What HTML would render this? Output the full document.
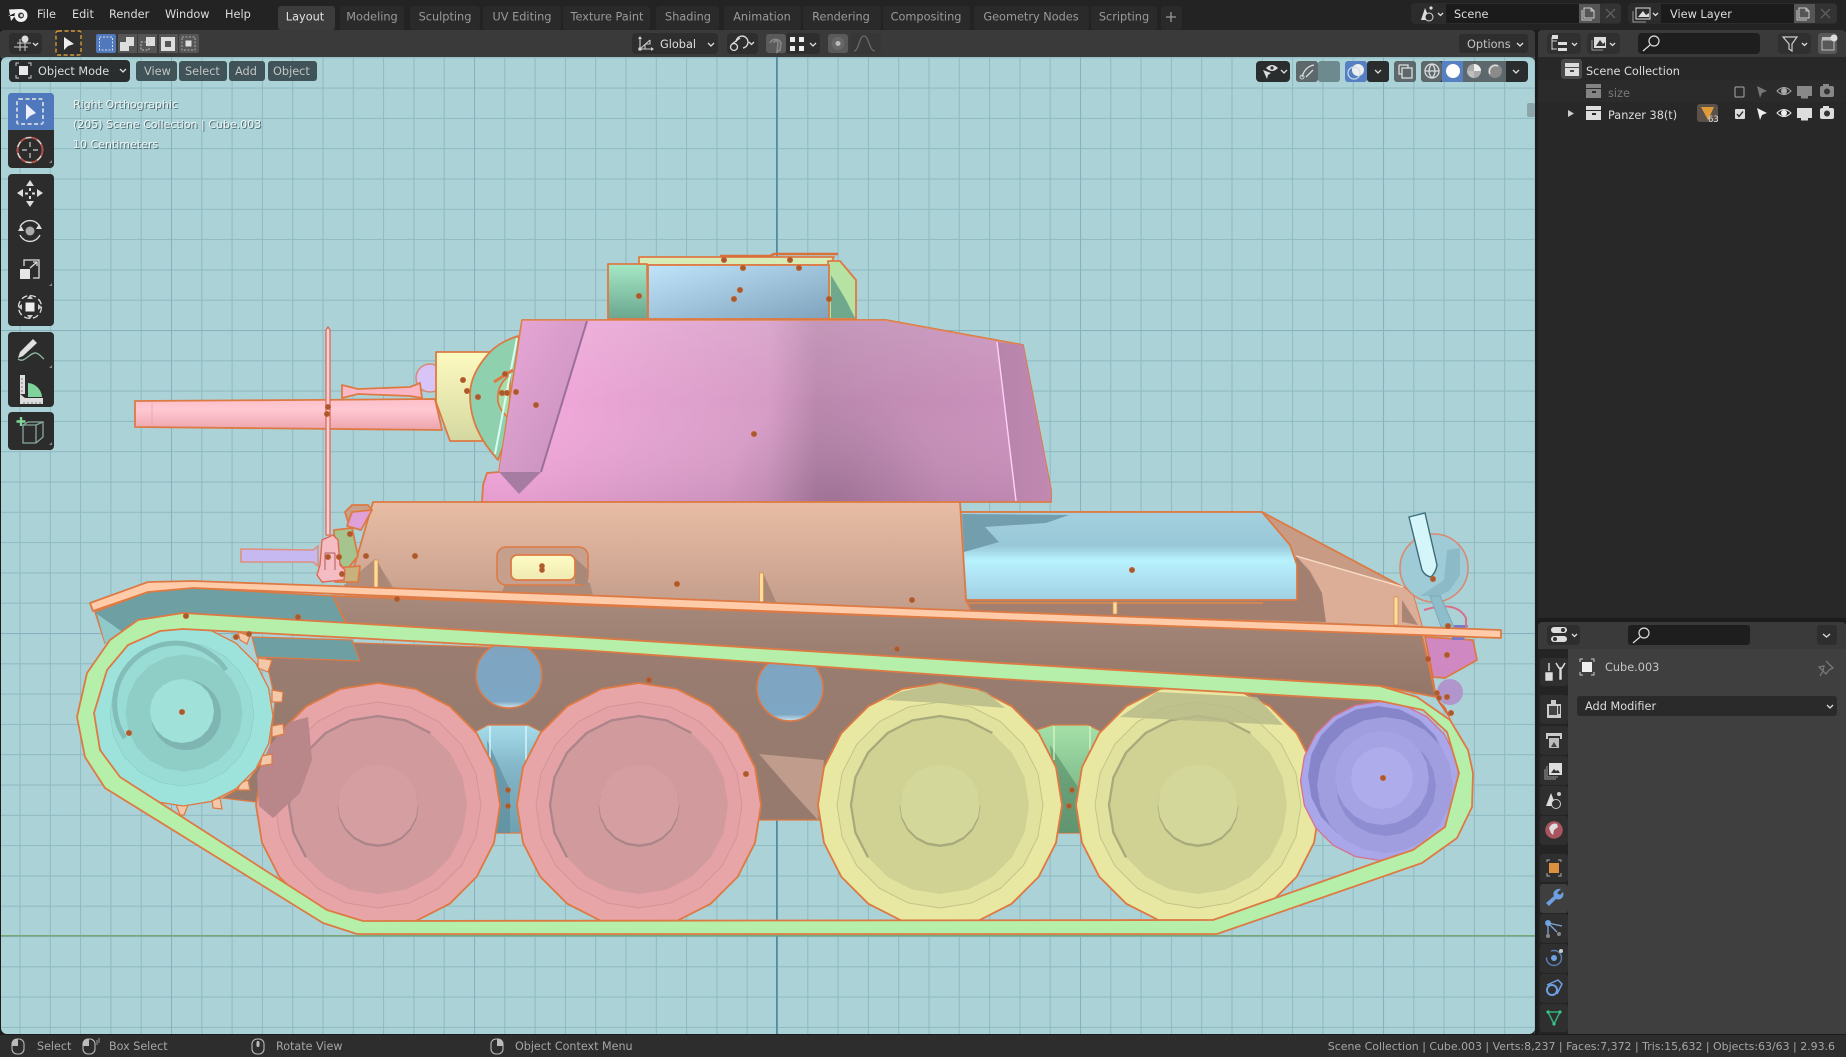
<!DOCTYPE html>
<html><head><meta charset="utf-8"><title>Blender</title>
<style>
html,body{margin:0;padding:0;background:#1c1c1c;width:1846px;height:1057px;overflow:hidden}
svg{display:block;position:absolute;left:0;top:0;filter:blur(.35px)}
text{font-family:"DejaVu Sans","Liberation Sans",sans-serif;font-size:11.3px;fill:#c4c4c4}
.t{fill:#9a9a9a;text-anchor:middle}
.o{fill:#eef5f6;font-size:11px;filter:drop-shadow(1px 1px 0 rgba(50,75,80,.75))}
.s{fill:#a6a6a6;font-size:11.15px}
.e{stroke:#dd7a44;stroke-width:1.8;stroke-linejoin:round}
.i{fill:#ddd}
.n{fill:none;stroke:#ddd;stroke-width:1.3}
</style></head><body>
<svg width="1846" height="1057" viewBox="0 0 1846 1057" xmlns="http://www.w3.org/2000/svg">
<defs>
<pattern id="gr" x="777" y="27" width="30.3" height="30.3" patternUnits="userSpaceOnUse"><path d="M.5 0V30.3M0 .5H30.3" stroke="#74a5b0" stroke-width="1" fill="none" opacity=".55"/></pattern>
<pattern id="gm" x="171" y="27" width="303" height="303" patternUnits="userSpaceOnUse"><path d="M.5 0V303M0 .5H303" stroke="#6d9eaa" stroke-width="1.2" fill="none" opacity=".28"/></pattern>
<polygon id="p" points="100,0 95.1,30.9 80.9,58.8 58.8,80.9 30.9,95.1 0,100 -30.9,95.1 -58.8,80.9 -80.9,58.8 -95.1,30.9 -100,0 -95.1,-30.9 -80.9,-58.8 -58.8,-80.9 -30.9,-95.1 0,-100 30.9,-95.1 58.8,-80.9 80.9,-58.8 95.1,-30.9"/>
<polyline id="a" fill="none" points="-80.9,58.8 -95.1,30.9 -100,0 -95.1,-30.9 -80.9,-58.8 -58.8,-80.9 -30.9,-95.1 0,-100 30.9,-95.1 58.8,-80.9"/>
<polyline id="b" fill="none" points="-92,39 -81,59 -59,81 -31,95 0,100 31,95 59,81 81,59 92,39"/>
<g id="wp">
<use href="#p" transform="scale(1.22)" fill="#e8a5a8" stroke="#dd7a44" stroke-width="1.5"/>
<use href="#p" transform="scale(1.03)" fill="#e4a2a6" stroke="#cf9497" stroke-width=".9"/>
<use href="#p" transform="scale(.89)" fill="#d19a9d"/>
<use href="#a" transform="scale(.89)" stroke="#ab858a" stroke-width="2.6"/>
<use href="#p" transform="translate(0 1.5) scale(.405)" fill="#ab858a"/>
<use href="#p" transform="translate(0 -.5) scale(.4)" fill="#d59ea1"/>
</g>
<g id="wy">
<use href="#p" transform="scale(1.22)" fill="#e8e8a2" stroke="#dd7a44" stroke-width="1.5"/>
<use href="#p" transform="scale(1.03)" fill="#e1e29d" stroke="#c2c288" stroke-width=".9"/>
<use href="#p" transform="scale(.89)" fill="#cfd292"/>
<use href="#a" transform="scale(.89)" stroke="#a9aa7c" stroke-width="2.6"/>
<use href="#p" transform="translate(0 1.5) scale(.405)" fill="#a9aa7c"/>
<use href="#p" transform="translate(0 -.5) scale(.4)" fill="#d4d79a"/>
</g>
<linearGradient id="tur" gradientUnits="userSpaceOnUse" x1="520" y1="0" x2="1050" y2="0"><stop offset="0" stop-color="#f4a9dc"/><stop offset=".25" stop-color="#e3a2d0"/><stop offset=".47" stop-color="#d69cc6"/><stop offset=".56" stop-color="#bc89af"/><stop offset=".66" stop-color="#c08bb3"/><stop offset="1" stop-color="#cc92be"/></linearGradient>
<linearGradient id="turv" x1="0" y1="0" x2="0" y2="1"><stop offset="0" stop-color="#fff" stop-opacity=".12"/><stop offset=".45" stop-color="#fff" stop-opacity="0"/><stop offset="1" stop-color="#503050" stop-opacity=".1"/></linearGradient>
<radialGradient id="tsh" gradientUnits="userSpaceOnUse" cx="835" cy="500" r="110"><stop offset="0" stop-color="#5c3e58" stop-opacity=".22"/><stop offset="1" stop-color="#5c3e58" stop-opacity="0"/></radialGradient>
<linearGradient id="arm" x1="0" y1="0" x2="1" y2="1"><stop offset="0" stop-color="#eaa8d8"/><stop offset="1" stop-color="#c48fba"/></linearGradient>
<linearGradient id="rear" x1="0" y1="0" x2="1" y2="0"><stop offset="0" stop-color="#b684ab"/><stop offset="1" stop-color="#c288b2"/></linearGradient>
<linearGradient id="hull" x1="0" y1="0" x2="0" y2="1"><stop offset="0" stop-color="#e9bda5"/><stop offset="1" stop-color="#c29c8a"/></linearGradient>
<linearGradient id="deck" x1="0" y1="0" x2="0" y2="1"><stop offset="0" stop-color="#a4d0de"/><stop offset=".38" stop-color="#98c8d8"/><stop offset=".55" stop-color="#b8f2ff"/><stop offset=".75" stop-color="#aee2f2"/><stop offset="1" stop-color="#9fd0e2"/></linearGradient>
<linearGradient id="brown" x1="0" y1="0" x2="0" y2="1"><stop offset="0" stop-color="#a88a7d"/><stop offset="1" stop-color="#937668"/></linearGradient>
<linearGradient id="brown2" x1="0" y1="0" x2="0" y2="1"><stop offset="0" stop-color="#9a7c70"/><stop offset="1" stop-color="#967a6e"/></linearGradient>
<linearGradient id="bar" x1="0" y1="0" x2="0" y2="1"><stop offset="0" stop-color="#fcc0ca"/><stop offset=".35" stop-color="#ffc8d2"/><stop offset="1" stop-color="#eca4ac"/></linearGradient>
<linearGradient id="yel" x1="0" y1="0" x2="0" y2="1"><stop offset="0" stop-color="#fdfac0"/><stop offset="1" stop-color="#d4d8a0"/></linearGradient>
<linearGradient id="grn" x1="0" y1="0" x2="0" y2="1"><stop offset="0" stop-color="#a6e8c6"/><stop offset="1" stop-color="#6aa78f"/></linearGradient>
<linearGradient id="blu" x1="0" y1="0" x2="1" y2="1"><stop offset="0" stop-color="#c0e4fa"/><stop offset="1" stop-color="#7fa3bc"/></linearGradient>
<linearGradient id="hole" x1="0" y1="0" x2="0" y2="1"><stop offset="0" stop-color="#7fa4c0"/><stop offset=".9" stop-color="#7da7c4"/><stop offset="1" stop-color="#cfe4f0"/></linearGradient>
<linearGradient id="sus" x1="0" y1="0" x2="0" y2="1"><stop offset="0" stop-color="#a6dcea"/><stop offset=".4" stop-color="#82b6c8"/><stop offset="1" stop-color="#6ea2b0"/></linearGradient>
<linearGradient id="sug" x1="0" y1="0" x2="0" y2="1"><stop offset="0" stop-color="#a4e0a6"/><stop offset=".4" stop-color="#8cc896"/><stop offset="1" stop-color="#6fa47c"/></linearGradient>
<linearGradient id="hat" x1="0" y1="0" x2="0" y2="1"><stop offset="0" stop-color="#fffcc6"/><stop offset="1" stop-color="#eeeab0"/></linearGradient>
</defs>

<!-- viewport -->
<rect x="1" y="57" width="1534" height="977" rx="6" fill="#abd2d7"/>
<rect x="1" y="57" width="1534" height="977" fill="url(#gr)"/>
<rect x="1" y="57" width="1534" height="977" fill="url(#gm)"/>
<rect x="776" y="57" width="1.6" height="977" fill="#4e8ba8"/>
<rect x="1" y="935" width="1534" height="1.4" fill="#76a878"/>

<g>
<!-- cupola -->
<polygon class="e" fill="#d8ecb8" points="639,257 834,257 830,265 639,265"/>
<path d="M720,256H770L774,254H838" stroke="#d9703c" stroke-width="2.6" fill="none"/>
<polygon class="e" fill="url(#grn)" points="608,264 647,264 648,319 608,319"/>
<polygon class="e" fill="#b6e2a4" points="828,261 840,261 856,280 856,319 828,319"/>
<polygon fill="#6fa88c" points="831,275 846,300 855,318 831,318"/>
<polygon class="e" fill="url(#blu)" points="648,265 829,265 829,319 648,319"/>
<!-- coax gun, sphere -->
<circle cx="430" cy="378" r="14" fill="#d8c4f6" stroke="#d98a70" stroke-width="1.5"/>
<polygon class="e" fill="#fab8c6" stroke-width="1.5" points="342,385 358,389 410,387 420,383 422,398 410,396 358,394 342,398"/>
<!-- barrel -->
<path class="e" fill="url(#bar)" d="M135,401L300,400L435,399L442,430L135,427Z"/>
<path d="M152,402V426" stroke="#e8a0a4" stroke-width="1" opacity=".7"/>
<!-- mantlet -->
<polygon class="e" fill="url(#yel)" points="436,352 492,352 482,441 450,441 436,402"/>
<path class="e" fill="#8fd0ae" d="M518,336C505,340 497,345 490,352C477,366 470,380 470,395C470,420 480,440 498,460L520,400Z"/>
<path class="e" fill="#a8dcaa" stroke-width="1.2" d="M510,375C500,382 497,392 498,402C500,410 505,415 510,420Z"/>
<path d="M517,338L495,454" stroke="#d9fff2" stroke-width="2"/>
<path d="M494,382L513,370" stroke="#dd7a44" stroke-width="3"/>
<!-- turret -->
<polygon class="e" fill="url(#tur)" points="522,320 886,320 1023,345 1051,490 1051,502 482,502 483,485 487,473 499,472"/>
<polygon fill="url(#turv)" points="522,320 886,320 1023,345 1051,490 1051,501 483,501 483,485 487,473 499,472"/>
<polygon fill="url(#tsh)" points="720,380 950,380 950,501 720,501"/>
<polygon fill="url(#rear)" points="997,342 1023,345 1051,490 1051,501 1016,501"/>
<path d="M997,342L1016,501" stroke="#ffd2f4" stroke-width="1.4"/>
<polygon fill="url(#arm)" points="523,321 587,321 541,472 499,472"/>
<path d="M587,321L541,472" stroke="#9a6f9a" stroke-width="2"/>
<polygon fill="#a67ca2" points="499,472 541,472 519,494"/>
<!-- rear body -->
<polygon class="e" fill="#c89c84" points="1262,512 1403,587 1413,595 1423,630 960,610 960,512"/>
<polygon fill="#a27f6f" points="1296,556 1310,572 1322,593 1326,622 966,612 966,600 1297,600"/>
<polygon fill="#dcae98" points="1296,556 1403,587 1413,595 1422,627 1326,622 1322,593 1310,570"/>
<path d="M1296,556L1403,587" stroke="#fbdcc8" stroke-width="1.4"/>
<polygon fill="#a88575" points="1402,622 1402,600 1418,625"/>
<!-- deck -->
<polygon class="e" fill="url(#deck)" points="960,512 1262,512 1290,545 1297,565 1297,600 966,600"/>
<polygon fill="#729eae" points="962,514 1069,515 1046,523 985,527 999,542 964,552"/>
<path d="M966,603H1263" stroke="#e08a50" stroke-width="1.4"/>
<!-- upper hull -->
<polygon class="e" fill="url(#hull)" points="373,502 960,502 966,600 972,612 345,598"/>
<polygon fill="#ad8b7a" points="590,583 594,600 500,596 505,585"/>
<polygon fill="#b08d7c" points="344,585 375,559 395,590 345,595"/>
<rect x="497" y="547" width="91" height="38" rx="9" fill="#c6a08c" stroke="#dd7a44" stroke-width="1.6"/>
<polygon fill="#a98878" points="575,558 588,570 588,584 575,584"/>
<rect x="511" y="555" width="64" height="25" rx="6" fill="url(#hat)" stroke="#dd7a44" stroke-width="1.8"/>
<polygon fill="#a98878" points="378,562 392,590 379,590"/>
<polygon fill="#a98878" points="764,575 777,604 764,604"/>
<!-- front hull bits -->
<polygon class="e" stroke-width="1.3" fill="#c9a08a" points="345,512 352,505 368,505 372,510 350,528"/>
<polygon class="e" stroke-width="1.3" fill="#e0a0d8" points="352,512 372,510 361,530 347,526"/>
<polygon class="e" stroke-width="1.3" fill="#a5c48e" points="334,530 352,528 358,556 345,572 335,555"/>
<polygon class="e" stroke-width="1.2" fill="#c9b07c" points="335,568 360,566 358,582 335,582"/>
<!-- yellow rods -->
<g stroke="#dd8a50" stroke-width=".8" fill="#f8e09c">
<rect x="374" y="560" width="4" height="28"/><rect x="759.5" y="573" width="4" height="30"/><rect x="1394" y="597" width="4" height="28"/><rect x="1113" y="602" width="4" height="12"/>
</g>
<!-- right side parts -->
<polygon class="e" fill="#d088c2" points="1425,637 1473,640 1477,660 1445,678 1433,677"/>
<polygon fill="#7878c8" points="1452,625 1468,625 1464,640 1452,640"/>
<path d="M1424,610C1440,605 1458,603 1466,618L1466,636" fill="none" stroke="#d8708a" stroke-width="2"/>
<circle cx="1450" cy="692" r="13" fill="#b096cc"/>
<circle cx="1434" cy="568" r="34" fill="#9fcbd6" stroke="#d98a70" stroke-width="1.6"/>
<polygon fill="#8cbac6" points="1447,550 1460,548 1460,575 1450,590 1440,596 1420,596 1444,580"/>
<path d="M1430,596L1440,596L1454,627L1443,632Z" fill="#8cbecb" stroke="#7fa8b4" stroke-width="1"/>
<path d="M1409,517L1425,513L1437,565Q1436,572 1431,577Q1425,576 1422,570Z" fill="#d4f6fb" stroke="#3f6c78" stroke-width="1.4"/>
<polygon points="1423,627 1436,697 1446,708 1452,722 1438,702 1426,640" fill="#e0683a"/>
<!-- lower body band -->
<polygon fill="#6ea0a3" stroke="#dd7a44" stroke-width="1.4" points="95,612 148,592 193,588 333,596 346,624 183,613 138,620 105,643"/>
<polygon fill="#8fc9c9" points="97,614 128,636 105,643"/>
<polygon class="e" fill="url(#brown)" stroke-width="1.4" points="333,596 1000,620 1422,635 1436,697 1380,686 1000,663 346,623"/>
<polygon fill="url(#brown2)" stroke="#dd7a44" stroke-width="1.2" points="262,640 580,650 1000,679 1380,700 1330,740 1300,820 300,820 256,802 222,798 245,785 270,750 275,700"/>
<polygon fill="#bf9c8c" points="759,754 824,760 818,820 793,793"/>
<polygon fill="#6ea0a3" stroke="#dd7a44" stroke-width="1.2" points="252,637 352,640 360,661 257,657"/>
<!-- rollers -->
<circle cx="509" cy="675" r="33" fill="url(#hole)" stroke="#dd7a44" stroke-width="1.6"/>
<circle cx="790" cy="688" r="33" fill="url(#hole)" stroke="#dd7a44" stroke-width="1.6"/>
<!-- suspension -->
<polygon fill="url(#sus)" stroke="#dd7a44" stroke-width="1.2" points="488,725 528,725 542,732 542,833 475,833 475,732"/>
<polygon fill="#5f8f9f" opacity=".7" points="487,740 510,790 510,833 490,833"/>
<path d="M490,726V760M526,726V760" stroke="#d8f6ff" stroke-width="1.4"/>
<polygon fill="url(#sug)" stroke="#dd7a44" stroke-width="1.2" points="1052,725 1088,725 1102,732 1102,833 1030,833 1030,732"/>
<polygon fill="#568a68" opacity=".6" points="1050,745 1080,790 1080,833 1058,833"/>
<path d="M1054,726V760M1090,726V760" stroke="#d6f6c8" stroke-width="1.3"/>
<!-- wheels -->
<use href="#wp" transform="translate(378 805)"/>
<polygon fill="#b98689" points="308,717 312,760 300,793 273,818 259,806 257,775 270,745 290,722"/>
<use href="#wp" transform="translate(639 805)"/>
<use href="#wy" transform="translate(940 805)"/>
<polygon fill="#b7bb88" opacity=".85" points="940,683 986,692 1005,708 940,703 885,700 900,692"/>
<use href="#wy" transform="translate(1198 805)"/>
<polygon fill="#b7bb88" opacity=".85" points="1157,692 1257,697 1283,725 1220,722 1120,717"/>
<!-- sprocket teeth -->
<g fill="#f2c8a8" stroke="#dd7a44" stroke-width="1.2">
<polygon points="258,658 272,660 268,672 258,668"/><polygon points="272,690 283,692 282,702 272,702"/>
<polygon points="272,726 283,724 284,734 272,737"/><polygon points="262,756 272,754 272,764 260,766"/>
<polygon points="240,783 248,780 250,790 238,790"/><polygon points="212,800 220,798 222,809 213,808"/>
<polygon points="176,804 188,805 184,815 180,815"/><polygon points="238,632 250,636 247,644 240,640"/>
</g>
<!-- sprocket -->
<use href="#p" transform="translate(183 716) scale(.9)" fill="#9de3dc" stroke="#dd7a44" stroke-width="1.5"/>
<use href="#p" transform="translate(182 714) scale(.72)" fill="#99dcd5" stroke="#8cc8c3" stroke-width=".8"/>
<use href="#p" transform="translate(184 713) scale(.585)" fill="#8ecec7"/>
<path d="M125,738A60,60 0 0 1 226,670" fill="none" stroke="#82bdb8" stroke-width="5"/>
<circle cx="186" cy="715" r="35" fill="#7eb5b2"/>
<use href="#p" transform="translate(182 711) scale(.32)" fill="#a0e2da"/>
<!-- idler -->
<use href="#p" transform="translate(1380 781) scale(.795)" fill="#a9a6ea" stroke="#d9708a" stroke-width="1.6"/>
<use href="#p" transform="translate(1378 776) scale(.7)" fill="#8785ca"/>
<use href="#p" transform="translate(1385 785) scale(.68)" fill="#a09ede"/>
<use href="#p" transform="translate(1386 786) scale(.5)" fill="#8f8dd2"/>
<use href="#p" transform="translate(1382 778) scale(.47)" fill="#a5a3e4"/>
<use href="#p" transform="translate(1382 778) scale(.31)" fill="#aeacea"/>
<!-- track -->
<path class="e" fill="#b6efa9" fill-rule="evenodd" d="M183,613L580,637L1000,663L1380,686L1417,697L1450,720L1468,750L1473,773L1472,807L1457,838L1422,863L1217,934L357,934L323,923L105,788L85,757L77,717L87,673L110,640L138,620ZM183,629L260,633L580,650L1000,679L1380,701L1423,710L1447,732L1459,773L1445,827L1413,850L1383,860L1213,920L363,921L327,910L120,777L100,750L94,713L107,670L128,645L160,631Z"/>
<!-- fender -->
<polygon class="e" fill="#ffcba8" points="90,603 148,582 193,581 580,595 1000,612 1501,630 1501,638 1000,620 580,604 193,588 148,592 93,611"/>
<!-- antenna & MG -->
<path d="M328,327L330,330L330,535L326,535L326,330Z" fill="#fbd0d4" stroke="#df6a58" stroke-width="1.3"/>
<path d="M241,549L313,550L318,546L318,566L313,562L241,562Z" fill="#c6b8f0" stroke="#e0907c" stroke-width="1.6"/>
<path d="M322,540L333,535L338,540L340,565L345,570L344,580L322,582L317,575L320,565Z" fill="#f6bcc4" stroke="#dd6a50" stroke-width="1.4"/>
<path d="M325,553V570M335,553V570M325,553H335" stroke="#b05a60" stroke-width="1" fill="none"/>
<!-- origin dots -->
<g fill="#a55a30" stroke="#c6622e" stroke-width=".9">
<circle cx="186" cy="616" r="2.6"/><circle cx="298" cy="617" r="2.6"/><circle cx="236" cy="637" r="2.6"/><circle cx="249" cy="634" r="2.6"/><circle cx="182" cy="712" r="2.6"/><circle cx="129" cy="733" r="2.6"/><circle cx="350" cy="534" r="2.6"/><circle cx="366" cy="556" r="2.6"/><circle cx="415" cy="556" r="2.6"/><circle cx="397" cy="599" r="2.6"/><circle cx="542" cy="566" r="2.4"/><circle cx="542" cy="570" r="2.4"/><circle cx="328" cy="557" r="2.6"/><circle cx="339" cy="557" r="2.6"/><circle cx="342" cy="574" r="2.6"/><circle cx="508" cy="790" r="2.4"/><circle cx="508" cy="806" r="2.4"/><circle cx="724" cy="260" r="2.6"/><circle cx="790" cy="260" r="2.6"/><circle cx="743" cy="268" r="2.6"/><circle cx="799" cy="268" r="2.6"/><circle cx="740" cy="290" r="2.6"/><circle cx="734" cy="299" r="2.6"/><circle cx="639" cy="296" r="2.6"/><circle cx="829" cy="299" r="2.6"/><circle cx="516" cy="392" r="2.6"/><circle cx="536" cy="405" r="2.6"/><circle cx="754" cy="434" r="2.6"/><circle cx="677" cy="584" r="2.6"/><circle cx="912" cy="600" r="2.6"/><circle cx="463" cy="380" r="2.6"/><circle cx="467" cy="391" r="2.6"/><circle cx="478" cy="397" r="2.6"/><circle cx="505" cy="374" r="2.6"/><circle cx="502" cy="393" r="2.6"/><circle cx="507" cy="393" r="2.6"/><circle cx="328" cy="407" r="2.6"/><circle cx="327" cy="414" r="2.6"/><circle cx="649" cy="680" r="2.6"/><circle cx="746" cy="774" r="2.6"/><circle cx="897" cy="649" r="2.4"/><circle cx="1072" cy="790" r="2.4"/><circle cx="1069" cy="806" r="2.4"/><circle cx="1132" cy="570" r="2.6"/><circle cx="1433" cy="579" r="2.6"/><circle cx="1448" cy="626" r="2.6"/><circle cx="1447" cy="655" r="2.6"/><circle cx="1428" cy="659" r="2.6"/><circle cx="1437" cy="693" r="2.4"/><circle cx="1439" cy="698" r="2.4"/><circle cx="1447" cy="697" r="2.6"/><circle cx="1451" cy="713" r="2.6"/><circle cx="1383" cy="778" r="2.6"/>
</g>
</g>

<!-- viewport overlay text -->
<text class="o" x="73" y="108">Right Orthographic</text>
<text class="o" x="73" y="128">(205) Scene Collection | Cube.003</text>
<text class="o" x="73" y="148">10 Centimeters</text>

<!-- viewport header -->
<rect x="9" y="60" width="121" height="22" rx="4" fill="#2a2d2e"/>
<path d="M16,66V63H19M28,63H31V66M16,75V78H19M28,78H31V75" fill="none" stroke="#ccc"/><rect x="19" y="66" width="9" height="9" fill="#e8e8e8"/>
<text x="38" y="75" class="i">Object Mode</text><path d="M120,69l3,3l3,-3" class="n" fill="none"/>
<rect x="136" y="61" width="41" height="20" rx="3" fill="#3f5358"/><text x="144" y="75">View</text>
<rect x="179" y="61" width="48" height="20" rx="3" fill="#3f5358"/><text x="185" y="75">Select</text>
<rect x="229" y="61" width="36" height="20" rx="3" fill="#3f5358"/><text x="235" y="75">Add</text>
<rect x="268" y="61" width="49" height="20" rx="3" fill="#3f5358"/><text x="273" y="75">Object</text>

<rect x="1256" y="61" width="34" height="21" rx="4" fill="#2a2d2e"/>
<path d="M1266,68q6,-6 12,0q-6,6 -12,0z" fill="#ddd"/><circle cx="1272" cy="68" r="1.600" fill="#2a2d2e"/><path d="M1263,70l8,3l-3,2l-1,4z" fill="#ddd"/><path d="M1281,70l3,3l3,-3" class="n"/>
<rect x="1296" y="61" width="22" height="21" rx="3" fill="#5c686b"/><rect x="1318" y="61" width="22" height="21" rx="3" fill="#6d8a8e"/>
<path d="M1302,77C1304,70 1308,66 1314,65M1306,77L1313,70" class="n" stroke="#bbb"/><circle cx="1302" cy="77" r="2" fill="none" stroke="#ccc"/>
<rect x="1345" y="61" width="22" height="21" rx="3" fill="#5680c2"/><rect x="1367" y="61" width="22" height="21" rx="3" fill="#2a2d2e"/>
<circle cx="1358" cy="70" r="6" fill="#eee"/><circle cx="1354" cy="73" r="6" fill="none" stroke="#cde" stroke-width="1.2"/><path d="M1375,70l3,3l3,-3" class="n"/>
<rect x="1394" y="61" width="22" height="21" rx="3" fill="#5c686b"/><path d="M1399,65h9v3M1399,65v9h3M1402,68h10v10h-10z" class="n" stroke="#ccc"/>
<rect x="1421" y="61" width="107" height="21" rx="4" fill="#2a2d2e"/>
<rect x="1421" y="61" width="21" height="21" rx="3" fill="#5c686b"/><rect x="1442" y="61" width="21" height="21" fill="#5680c2"/><rect x="1463" y="61" width="21" height="21" fill="#5c686b"/><rect x="1484" y="61" width="22" height="21" fill="#5c686b"/>
<circle cx="1432" cy="71" r="7" class="n" stroke="#bbb"/><path d="M1425,71H1439M1432,64C1428,68 1428,74 1432,78M1432,64C1436,68 1436,74 1432,78" class="n" stroke="#bbb"/>
<circle cx="1453" cy="71" r="7" fill="#fff"/>
<circle cx="1474" cy="71" r="7" fill="#aaa"/><path d="M1474,71V64A7,7 0 0 1 1481,71Z" fill="#eee"/><path d="M1474,71H1467A7,7 0 0 0 1474,78Z" fill="#ddd" opacity=".4"/>
<circle cx="1495" cy="71" r="7" fill="#8a8a8a"/><path d="M1490,74A6,6 0 0 1 1498,66" fill="none" stroke="#ddd" stroke-width="1.6"/>
<path d="M1513,70l3,3l3,-3" class="n"/>
<rect x="1527" y="103" width="8" height="14" rx="2" fill="#8ba6ab"/>

<!-- tool shelf -->
<rect x="8" y="93" width="46" height="75" rx="4" fill="#2c2c2c"/><path d="M8,130V97a4,4 0 0 1 4,-4H50a4,4 0 0 1 4,4V130Z" fill="#4f78bd"/>
<rect x="17" y="99" width="26" height="25" rx="2" fill="none" stroke="#c4cede" stroke-width="2" stroke-dasharray="4 2.5"/><path d="M26,104V120L30,116L36,113Z" fill="#eef"/>
<circle cx="30" cy="150" r="12.5" fill="none" stroke="#e8d0c8" stroke-width="1.6"/><circle cx="30" cy="150" r="12.5" fill="none" stroke="#c04848" stroke-width="1.6" stroke-dasharray="6 6"/><path d="M30,142V147M30,153V158M22,150H27M33,150H38" stroke="#ccc" stroke-width="1.2"/>
<rect x="8" y="174" width="46" height="152" rx="4" fill="#2c2c2c"/>
<g fill="#ddd"><path d="M30,180l-4,6h8zM30,207l-4,-6h8zM17,193l6,-4v8zM43,193l-6,-4v8z"/><rect x="29" y="188" width="2" height="3"/><rect x="29" y="196" width="2" height="3"/><rect x="25" y="192.5" width="3" height="2"/><rect x="32" y="192.5" width="3" height="2"/></g>
<circle cx="30" cy="231" r="4.5" fill="#aaa"/><path d="M20,227A11,11 0 0 1 40,227M20,235A11,11 0 0 0 40,235" class="n"/><path d="M18,231l3,-5l3,5zM42,229l-3,-5l-3,5z" fill="#ddd"/>
<rect x="20" y="269" width="10" height="10" fill="#e6e6e6"/><path d="M24,266V260H39V278H33M30,268L37,262M33,262H37V266" class="n"/>
<circle cx="30" cy="307" r="11.5" class="n" stroke-dasharray="6 3"/><rect x="25.5" y="302.5" width="9" height="9" fill="#eee"/><path d="M30,295l-3,4h6zM30,319l-3,-4h6zM18,307l4,-3v6zM42,307l-4,-3v6z" fill="#ccc"/>
<rect x="8" y="332" width="46" height="75" rx="4" fill="#2c2c2c"/>
<path d="M33,339L37,343L23,356L18,358L20,352Z" fill="#e0e0e0"/><path d="M18,359C24,364 30,352 36,353C40,354 42,358 44,359" fill="none" stroke="#8fb8a0" stroke-width="1.3"/>
<path d="M20,375H25V394H20ZM25,398L20,394V404H43V398Z" fill="#ddd"/><path d="M28,397V383A15,15 0 0 1 42,397Z" fill="#7fd29c"/>
<path d="M22,378v20M24,404v-2M28,404v-2M32,404v-2M36,404v-2M40,404v-2" stroke="#666" stroke-width=".8" stroke-dasharray="2 2"/>
<rect x="8" y="412" width="46" height="38" rx="4" fill="#2c2c2c"/>
<path d="M21,417V426M16.5,421.500H25.5" stroke="#7fd79a" stroke-width="2.4"/><path d="M23,425H36L43,422V437L36,443H23ZM36,425V443M23,425L28,422H43" fill="none" stroke="#88a89e" stroke-width="1.3"/>
<path d="M49,163l3,-3v3zM49,286l3,-3v3zM49,368l3,-3v3zM49,445l3,-3v3z" fill="#888"/>

<!-- top bar -->
<rect x="0" y="0" width="1846" height="30" fill="#232323"/>
<circle cx="21" cy="15.5" r="6.5" fill="#f2f2f2"/><circle cx="21" cy="15.5" r="3" fill="#3d3d3d"/><circle cx="21.500" cy="15.500" r="1.500" fill="#dcdcdc"/><path d="M9,9.500L20,9L16,12.500L8,16L15,16L11,21Z" fill="#f2f2f2"/>
<text x="37" y="18" class="i">File</text><text x="72" y="18" class="i">Edit</text><text x="109" y="18" class="i">Render</text><text x="165" y="18" class="i">Window</text><text x="225" y="18" class="i">Help</text>
<g fill="#2a2a2a">
<rect x="340" y="6" width="64" height="24" rx="3"/><rect x="410" y="6" width="70" height="24" rx="3"/><rect x="483" y="6" width="78" height="24" rx="3"/><rect x="563" y="6" width="87" height="24" rx="3"/><rect x="656" y="6" width="63" height="24" rx="3"/><rect x="724" y="6" width="77" height="24" rx="3"/><rect x="803" y="6" width="78" height="24" rx="3"/><rect x="883" y="6" width="87" height="24" rx="3"/><rect x="974" y="6" width="115" height="24" rx="3"/><rect x="1091" y="6" width="66" height="24" rx="3"/><rect x="1161" y="6" width="21" height="24" rx="3"/>
</g>
<rect x="278" y="6" width="57" height="24" rx="3" fill="#3c3c3c"/>
<text class="t" x="305" y="20.5" style="fill:#e2e2e2">Layout</text><text class="t" x="372" y="20.5">Modeling</text><text class="t" x="445" y="20.5">Sculpting</text><text class="t" x="522" y="20.5">UV Editing</text><text class="t" x="607" y="20.5">Texture Paint</text><text class="t" x="688" y="20.5">Shading</text><text class="t" x="762" y="20.5">Animation</text><text class="t" x="841" y="20.5">Rendering</text><text class="t" x="926" y="20.5">Compositing</text><text class="t" x="1031" y="20.5">Geometry Nodes</text><text class="t" x="1124" y="20.5">Scripting</text>
<path d="M1171,12V22M1166,17H1176" stroke="#999" stroke-width="1.3"/>

<!-- scene selectors -->
<g>
<rect x="1411" y="3" width="210" height="21" rx="4" fill="#2c2c2c"/><rect x="1446" y="4" width="133" height="19" fill="#1b1b1b"/><rect x="1579" y="4" width="21" height="19" fill="#555"/><rect x="1600" y="4" width="21" height="19" rx="3" fill="#333"/>
<path d="M1421,20L1425,8L1430,20Z" fill="#ddd"/><circle cx="1429" cy="17" r="4" fill="#2c2c2c" stroke="#ddd"/><circle cx="1431" cy="8" r="1.6" fill="#ddd"/><path d="M1438,13l2.5,2.5l2.5,-2.5" class="n"/>
<text x="1454" y="18" class="i">Scene</text>
<path d="M1584,8H1591L1594,11V18H1584ZM1591,8V11H1594M1582,10V20H1592" fill="none" stroke="#ccc"/><path d="M1606,9L1615,18M1615,9L1606,18" stroke="#5f5f5f" stroke-width="1.3"/>
<rect x="1628" y="3" width="209" height="21" rx="4" fill="#2c2c2c"/><rect x="1661" y="4" width="133" height="19" fill="#1b1b1b"/><rect x="1794" y="4" width="21" height="19" fill="#555"/><rect x="1815" y="4" width="22" height="19" rx="3" fill="#333"/>
<path d="M1636,8H1650V19H1636Z" fill="none" stroke="#ddd"/><path d="M1638,17L1643,11L1646,15L1649,13V17Z" fill="#ddd"/><path d="M1633,11V22H1646" fill="none" stroke="#999"/><path d="M1653,13l2.5,2.5l2.5,-2.5" class="n"/>
<text x="1670" y="18" class="i">View Layer</text>
<path d="M1799,8H1806L1809,11V18H1799ZM1806,8V11H1809M1797,10V20H1807" fill="none" stroke="#ccc"/><path d="M1821,9L1830,18M1830,9L1821,18" stroke="#5f5f5f" stroke-width="1.3"/>
</g>

<!-- 3D view tool header -->
<path d="M0,57V34a4,4 0 0 1 4,-4H1531a4,4 0 0 1 4,4V57Z" fill="#3a3a3a"/>
<rect x="9" y="33" width="33" height="21" rx="4" fill="#2e2e2e"/>
<path d="M14,47H28M17,43H31M20,39V51M25,39V51" stroke="#ccc" stroke-width="1"/><circle cx="25" cy="39" r="3.5" fill="#ddd"/><path d="M33,43l2.5,2.5l2.5,-2.5" class="n"/>
<rect x="56" y="31" width="25" height="24" rx="2" fill="#2e2e2e" stroke="#d69a3a" stroke-width="1.4" stroke-dasharray="4 2.5"/>
<path d="M64,37V50L68,46L74,44Z" fill="#eee"/>
<rect x="96" y="34" width="20" height="19" rx="2" fill="#4f78bd"/><rect x="99.5" y="37" width="13" height="13" fill="none" stroke="#dde" stroke-dasharray="2 1.5"/>
<rect x="118" y="34" width="19" height="19" fill="#555"/><path d="M120,42H126V37H134V46H129V51H120Z" fill="#ddd"/>
<rect x="138" y="34" width="19" height="19" fill="#555"/><path d="M146,37H155V46H146Z" fill="#ddd"/><rect x="141" y="42" width="8" height="8" fill="none" stroke="#bbb" stroke-dasharray="2 1.5"/>
<rect x="159" y="34" width="19" height="19" fill="#555"/><path d="M161,37H175V51H161ZM165,41V47H171V41Z" fill="#ddd" fill-rule="evenodd"/>
<rect x="179" y="34" width="20" height="19" rx="2" fill="#555"/><rect x="182" y="37" width="13" height="13" fill="none" stroke="#aaa" stroke-dasharray="2 1.5"/><rect x="185.5" y="40.5" width="6" height="6" fill="#ddd"/>

<rect x="632" y="33" width="86" height="21" rx="4" fill="#2e2e2e"/><path d="M640,38V49H652M640,49L650,40M640,38V37M645,49V44M645,44H650V40" fill="none" stroke="#ccc" stroke-width="1.1"/><path d="M640,36l-2,3h4zM654,49l-3,-2v4z" fill="#ccc"/><circle cx="640" cy="49" r="1.800" fill="#ccc"/>
<text x="660" y="48" class="i">Global</text><path d="M708,43l3,3l3,-3" class="n"/>
<rect x="727" y="33" width="31" height="21" rx="4" fill="#2e2e2e"/><circle cx="734" cy="47" r="3.5" class="n"/><path d="M736,42A6,6 0 1 1 743,48M732,44L740,38" class="n"/><path d="M749,42l2.5,2.5l2.5,-2.5" class="n"/>
<rect x="766" y="34" width="20" height="19" rx="3" fill="#5a5a5a"/><path d="M770,43A6,6 0 0 1 781,43L780,50L777,52L778,43A2,2 0 0 0 774,43" fill="none" stroke="#888" stroke-width="1.6"/>
<rect x="786" y="33" width="34" height="21" rx="3" fill="#2e2e2e"/><g fill="#eee"><rect x="790" y="37" width="5" height="5"/><rect x="799" y="37" width="5" height="5"/><rect x="790" y="46" width="5" height="5"/><rect x="799" y="46" width="5" height="5"/></g><path d="M810,43l3,3l3,-3" class="n"/>
<rect x="828" y="34" width="20" height="19" rx="3" fill="#5a5a5a"/><circle cx="838" cy="43.5" r="6.5" fill="#686868"/><circle cx="838" cy="43.5" r="2.5" fill="#bbb"/>
<path d="M854,51C859,51 859,36 864,36C869,36 869,51 875,51" fill="none" stroke="#8a8a8a" stroke-width="1.2"/><rect x="851" y="33" width="30" height="21" rx="3" fill="#343434" opacity=".35"/>
<rect x="1459" y="34" width="69" height="19" rx="3" fill="#2e2e2e"/><text x="1467" y="48">Options</text><path d="M1517,43l3,3l3,-3" class="n"/>

<!-- outliner -->
<rect x="1538" y="57" width="308" height="561" fill="#282828"/>
<path d="M1538,57V34a4,4 0 0 1 4,-4H1842a4,4 0 0 1 4,4V57Z" fill="#3a3a3a"/>
<rect x="1547" y="33" width="34" height="21" rx="4" fill="#303030"/><path d="M1552,37v13M1552,41h5M1552,49h5" fill="none" stroke="#ccc"/><rect x="1552" y="35" width="6" height="4" fill="#ddd"/><rect x="1558" y="42" width="9" height="3" fill="#ddd"/><rect x="1558" y="48" width="9" height="3" fill="#ddd"/><path d="M1572,43l2.5,2.5l2.5,-2.5" class="n"/>
<rect x="1587" y="33" width="33" height="21" rx="4" fill="#303030"/><path d="M1594,37H1606V48H1594Z" fill="#ddd"/><path d="M1596,46L1600,40L1603,44L1605,42V46Z" fill="#333"/><path d="M1592,40V50H1603" fill="none" stroke="#999"/><path d="M1610,43l2.5,2.5l2.5,-2.5" class="n"/>
<rect x="1638" y="33" width="122" height="21" rx="4" fill="#1e1e1e"/><circle cx="1654" cy="41" r="5" fill="none" stroke="#ddd" stroke-width="1.2"/><path d="M1650,45L1643,51" stroke="#ddd" stroke-width="1.2"/>
<rect x="1778" y="33" width="33" height="21" rx="4" fill="#303030"/><path d="M1783,37H1797L1792,44V51L1789,49V44Z" fill="none" stroke="#ccc" stroke-width="1.2"/><path d="M1802,43l2.5,2.5l2.5,-2.5" class="n"/>
<rect x="1818" y="33" width="19" height="21" rx="3" fill="#585858"/><rect x="1822" y="40" width="12" height="10" fill="none" stroke="#bbb"/><rect x="1822" y="37" width="12" height="3" fill="#bbb"/><circle cx="1834" cy="38" r="3.5" fill="#ddd"/>
<rect x="1538" y="80" width="308" height="22" fill="#2b2b2b"/>
<rect x="1561" y="59" width="21" height="20" rx="3" fill="#4a4a4a"/><rect x="1565" y="63" width="14" height="4" fill="#ddd"/><path d="M1565,68H1579V76H1565ZM1570,70V72H1574V70Z" fill="#ddd" fill-rule="evenodd"/>
<text x="1586" y="75" class="i">Scene Collection</text>
<g opacity=".5"><rect x="1586" y="84" width="15" height="4" fill="#ddd"/><path d="M1586,89H1601V98H1586ZM1592,91V93H1596V91Z" fill="#ddd" fill-rule="evenodd"/></g>
<text x="1608" y="97" style="fill:#7a7a7a">size</text>
<rect x="1735" y="87" width="9" height="10" rx="1" fill="none" stroke="#aaa"/>
<path d="M1757,86L1767,91L1762,93L1760,98Z" fill="#777"/>
<circle cx="1784" cy="91" r="3" fill="#aaa"/><path d="M1777,91Q1784,84 1791,91Q1784,98 1777,91Z" fill="none" stroke="#aaa"/>
<rect x="1797" y="86" width="15" height="10" fill="#888"/><rect x="1801" y="96" width="7" height="2.5" fill="#888"/>
<rect x="1820" y="86" width="14" height="11" rx="2" fill="#888"/><circle cx="1827" cy="91.5" r="3" fill="#333"/><rect x="1823" y="84" width="6" height="2" fill="#888"/>
<path d="M1568,110l6,3.5l-6,3.5z" fill="#ccc"/>
<rect x="1586" y="106" width="15" height="4" fill="#ddd"/><path d="M1586,111H1601V120H1586ZM1592,113V115H1596V113Z" fill="#ddd" fill-rule="evenodd"/>
<text x="1608" y="119" class="i">Panzer 38(t)</text>
<rect x="1697" y="104" width="21" height="18" rx="3" fill="#5a5248"/><path d="M1701,107H1714L1708,120Z" fill="#e09a3a"/><text x="1708" y="122" style="font-size:8.5px;fill:#ddd">63</text>
<rect x="1735" y="109" width="10" height="10" rx="1" fill="#ddd"/><path d="M1737,114l2,2.5l4,-5" fill="none" stroke="#282828" stroke-width="1.4"/>
<path d="M1757,108L1767,113L1762,115L1760,120Z" fill="#eee"/>
<circle cx="1784" cy="113" r="3" fill="#eee"/><path d="M1777,113Q1784,106 1791,113Q1784,120 1777,113Z" fill="none" stroke="#eee"/>
<rect x="1797" y="108" width="15" height="10" fill="#ddd"/><rect x="1801" y="118" width="7" height="2.5" fill="#ddd"/>
<rect x="1820" y="108" width="14" height="11" rx="2" fill="#ddd"/><circle cx="1827" cy="113.5" r="3" fill="#333"/><rect x="1823" y="106" width="6" height="2" fill="#ddd"/>

<!-- properties -->
<path d="M1538,649V626a4,4 0 0 1 4,-4H1842a4,4 0 0 1 4,4V649Z" fill="#3a3a3a"/>
<rect x="1547" y="625" width="33" height="20" rx="4" fill="#2e2e2e"/><rect x="1551" y="627" width="16" height="6" rx="3" fill="#ddd"/><rect x="1551" y="636" width="16" height="6" rx="3" fill="#ddd"/><circle cx="1563" cy="630" r="2" fill="#333"/><circle cx="1555" cy="639" r="2" fill="#333"/><path d="M1572,634l2.5,2.5l2.5,-2.5" class="n"/>
<rect x="1628" y="625" width="122" height="20" rx="3" fill="#1e1e1e"/><circle cx="1644" cy="633" r="5" fill="none" stroke="#ddd" stroke-width="1.2"/><path d="M1640,637L1633,643" stroke="#ddd" stroke-width="1.2"/>
<rect x="1817" y="625" width="20" height="20" rx="3" fill="#2e2e2e"/><path d="M1823,634l3.5,3l3.5,-3" class="n"/>
<rect x="1538" y="649" width="30" height="385" fill="#242424"/>
<rect x="1568" y="649" width="278" height="385" fill="#3f3f3f"/>
<g fill="#2f2f2f">
<rect x="1540" y="658" width="28" height="28" rx="3"/>
<rect x="1540" y="695" width="28" height="29" rx="3"/><rect x="1540" y="726" width="28" height="29" rx="3"/><rect x="1540" y="756" width="28" height="29" rx="3"/><rect x="1540" y="786" width="28" height="29" rx="3"/><rect x="1540" y="816" width="28" height="29" rx="3"/>
<rect x="1540" y="854" width="28" height="28" rx="3"/><rect x="1540" y="914" width="28" height="29" rx="3"/><rect x="1540" y="944" width="28" height="29" rx="3"/><rect x="1540" y="974" width="28" height="29" rx="3"/><rect x="1540" y="1004" width="28" height="28" rx="3"/>
</g>
<rect x="1540" y="884" width="28" height="29" rx="3" fill="#3f3f3f"/>
<!-- tabs icons -->
<path d="M1549,663V671M1546,673H1552V680H1546ZM1560,668V679H1561V668" fill="#ddd" stroke="#ddd" stroke-width="1.4"/><path d="M1556,663L1559,668L1562,668L1565,663" fill="none" stroke="#ddd" stroke-width="1.5"/>
<path d="M1547,704H1561V718H1547ZM1551,700H1556V704H1551Z" fill="#ccc"/><rect x="1549" y="706" width="8" height="9" fill="#444"/><rect x="1558" y="706" width="2" height="8" fill="#444"/>
<path d="M1546,733H1562V739H1560V736H1548V739H1546Z" fill="#ccc"/><rect x="1549" y="738" width="10" height="10" fill="#bbb"/><path d="M1551,747l3,-5l3,5z" fill="#444"/>
<rect x="1549" y="763" width="13" height="12" fill="#ddd"/><path d="M1551,773l3,-4l2,2l2,-1l2,3z" fill="#333"/><path d="M1547,766V777H1558M1545,769V779H1556" fill="none" stroke="#999"/>
<path d="M1546,806L1551,793L1556,806Z" fill="#ddd"/><circle cx="1556" cy="804" r="4.5" fill="#2f2f2f" stroke="#ccc"/><circle cx="1559" cy="794" r="2" fill="#ccc"/>
<circle cx="1554" cy="830" r="8" fill="#a85560"/><path d="M1549,828q3,-6 8,-4l1,3l-4,3l-1,5l-2,-2z" fill="#ddd"/><circle cx="1554" cy="830" r="8" fill="none" stroke="#a85560" stroke-width="1.5"/>
<path d="M1547,862v-2h3M1558,860h3v2M1547,873v3h3M1558,876h3v-3" fill="none" stroke="#aaa"/><rect x="1549" y="863" width="10" height="10" fill="#dd9040"/>
<path d="M1561,889C1556,888 1552,892 1554,896L1546,903L1549,906L1556,899C1560,901 1565,897 1563,892L1560,895L1557,893Z" fill="#6da0e0"/>
<circle cx="1548" cy="923" r="3" fill="#6da0e0"/><path d="M1548,923L1557,932M1548,923V934M1548,923L1562,926" stroke="#7ea6d6" stroke-width="1.3"/><circle cx="1559" cy="934" r="2" fill="#888"/><circle cx="1548" cy="936" r="2" fill="#888"/>
<circle cx="1554" cy="958" r="3" fill="#6da0e0"/><circle cx="1554" cy="958" r="7.5" fill="none" stroke="#5a80b8" stroke-width="1.4" stroke-dasharray="24 8"/><circle cx="1561" cy="951" r="2" fill="#ccc"/>
<circle cx="1552" cy="990" r="5" fill="none" stroke="#6da0e0" stroke-width="2"/><path d="M1547,985L1558,980L1562,984L1557,994" fill="none" stroke="#6da0e0" stroke-width="1.5"/>
<path d="M1548,1012H1560L1554,1024Z" fill="none" stroke="#2fae7c" stroke-width="1.6"/><circle cx="1548" cy="1012" r="1.6" fill="#3fc48c"/><circle cx="1560" cy="1012" r="1.6" fill="#3fc48c"/><circle cx="1554" cy="1024" r="1.6" fill="#3fc48c"/>
<!-- modifier content -->
<path d="M1580,662v-3h3M1591,659h3v3M1580,672v3h3M1591,675h3v-3" fill="none" stroke="#ccc"/><rect x="1582" y="662" width="10" height="10" fill="#eee"/>
<text x="1605" y="671">Cube.003</text>
<path d="M1826,661L1833,668L1829,670L1826,674L1823,671L1820,676M1823,671L1819,667L1824,666Z" fill="none" stroke="#777" stroke-width="1.3"/>
<rect x="1577" y="696" width="260" height="20" rx="3" fill="#2a2a2a"/><text x="1585" y="710" class="i">Add Modifier</text><path d="M1827,705l3,3l3,-3" class="n"/>

<!-- status bar -->
<rect x="0" y="1035" width="1846" height="22" fill="#2d2d2d"/>
<g fill="none" stroke="#bbb" stroke-width="1.1"><rect x="12" y="1039" width="12" height="15" rx="5"/><rect x="83" y="1039" width="12" height="15" rx="5"/><rect x="252" y="1039" width="12" height="15" rx="5"/><rect x="491" y="1039" width="12" height="15" rx="5"/></g>
<path d="M12,1046V1044a5,5 0 0 1 6,-5V1046Z" fill="#bbb"/><path d="M83,1046V1044a5,5 0 0 1 6,-5V1046Z" fill="#bbb"/><rect x="256.5" y="1041" width="3" height="6" rx="1.5" fill="#bbb"/><path d="M503,1046V1044a5,5 0 0 0 -6,-5V1046Z" fill="#bbb"/>
<path d="M97,1040v5M99,1038v5" stroke="#999"/>
<text class="s" x="37" y="1050">Select</text><text class="s" x="109" y="1050">Box Select</text><text class="s" x="276" y="1050">Rotate View</text><text class="s" x="515" y="1050">Object Context Menu</text>
<text class="s" x="1835" y="1050" text-anchor="end" style="font-size:10.95px">Scene Collection | Cube.003 | Verts:8,237 | Faces:7,372 | Tris:15,632 | Objects:63/63 | 2.93.6</text>
</svg>
</body></html>
